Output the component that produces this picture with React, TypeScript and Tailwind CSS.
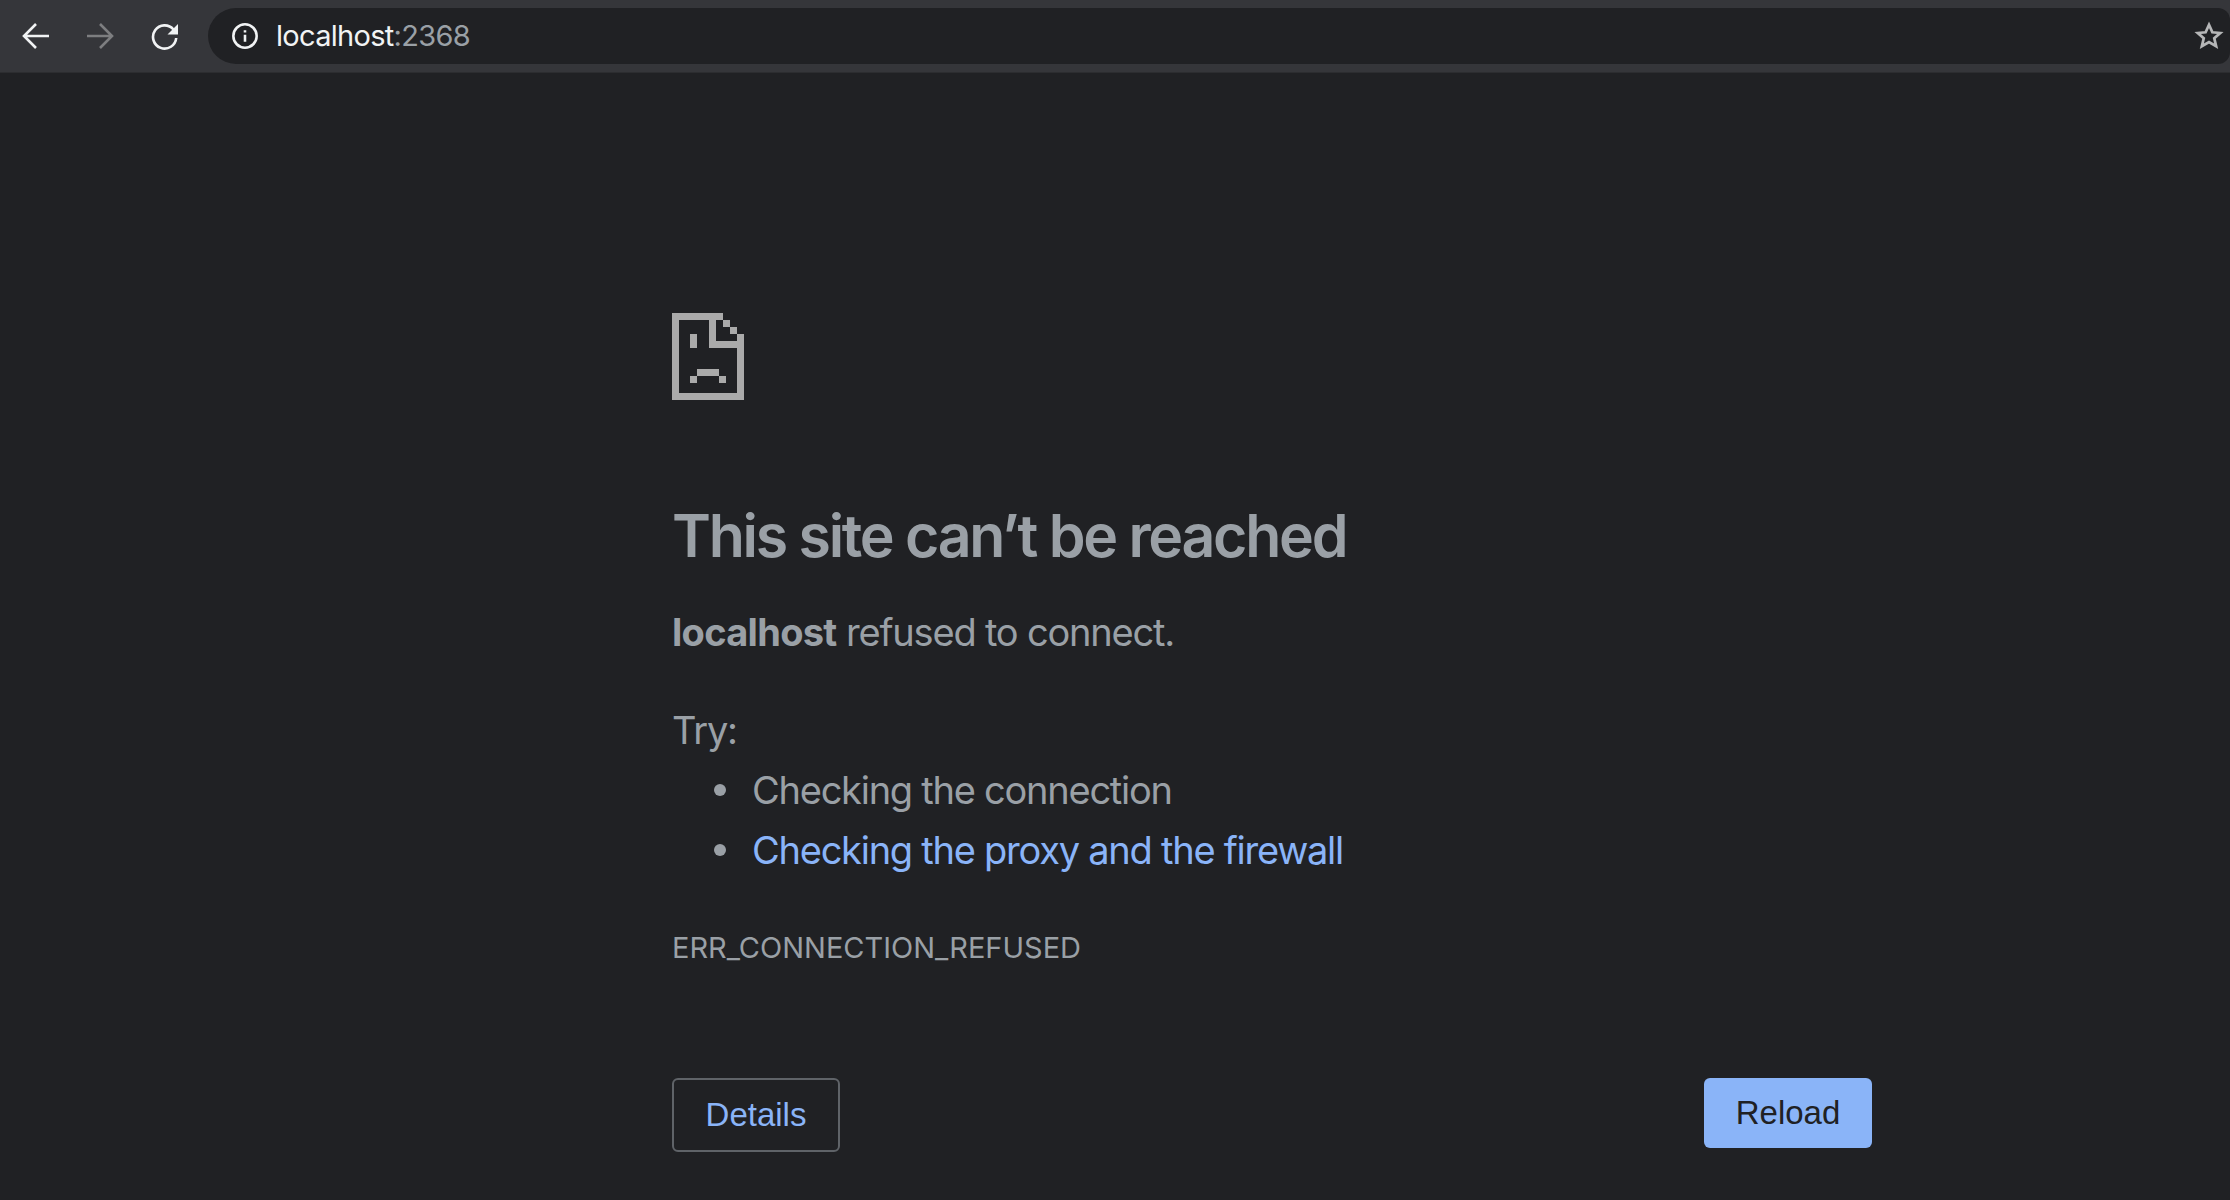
const App = () => {
  return (
    <div className="h-[1200px] overflow-hidden bg-[#202124] font-['Inter',sans-serif] text-[#9aa0a6]">
      {/* Toolbar */}
      <div className="flex h-[73px] items-center bg-[#35363a] border-b-[1px] border-[#2c2d30]">
        <div className="flex w-[208px] shrink-0 items-center pl-[22px]">
          <svg width="28" height="28" viewBox="0 0 28 28" fill="none" stroke="#f1f3f4" strokeWidth="2.6">
            <path d="M27 14H2M14 2L2 14l12 12" />
          </svg>
          <svg className="ml-[36px]" width="28" height="28" viewBox="0 0 28 28" fill="none" stroke="#7d7e80" strokeWidth="2.6">
            <path d="M1 14h25M14 2l12 12-12 12" />
          </svg>
          <svg className="ml-[37px]" width="28" height="28" viewBox="0 0 28 28" fill="none">
            <path d="M22.5 7.5A11.6 11.6 0 1 0 25.2 16" stroke="#f1f3f4" strokeWidth="2.6" />
            <path d="M27 2v10.5H16.5z" fill="#f1f3f4" />
          </svg>
        </div>
        <div className="flex h-[56px] flex-1 items-center rounded-l-[28px] rounded-r-[12px] bg-[#202124] pl-[23px] pr-[6px]">
          <svg width="28" height="28" viewBox="0 0 24 24" fill="none" stroke="#f1f3f4" strokeWidth="2.2">
            <circle cx="12" cy="12" r="10" />
            <path d="M12 11v6M12 7v2" />
          </svg>
          <div className="ml-[17px] flex-1 text-[29px] tracking-[-0.7px] text-[#f1f3f4]">
            localhost<span className="text-[#9aa0a6]">:2368</span>
          </div>
          <svg width="30" height="30" viewBox="0 0 24 24" fill="none" stroke="#b5b6b7" strokeWidth="2.2">
            <path d="M12 3l2.7 6 6.3.6-4.8 4.2 1.5 6.4L12 16.8l-5.7 3.4 1.5-6.4L3 9.6 9.3 9z" />
          </svg>
        </div>
      </div>

      {/* Error page */}
      <main className="ml-[672px] w-[1200px] pt-[240px]">
        <svg width="72" height="87" viewBox="66 39 216 261" fill="#aaaaaa">
          <path d="M66 39h153v21H87v219h174V144h-84V60h21v63h63v-21h21v198H66z" />
          <path d="M219 60h21v21h-21zM240 81h21v21h-21zM120 102h21v42h-21zM141 207h66v21h-66zM120 228h21v21h-21zM207 228h21v21h-21z" />
        </svg>

        <h1 className="mt-[102px] text-[59px] font-semibold leading-[68px] tracking-[-2.26px]">This site can’t be reached</h1>
        <p className="mt-[38px] text-[38px] leading-[48px] tracking-[-1.2px]">
          <strong className="font-bold tracking-[-0.7px]">localhost</strong> refused to connect.
        </p>
        <p className="mt-[50px] text-[38px] leading-[48px] tracking-[-1.2px]">Try:</p>
        <ul className="text-[38px] tracking-[-1.25px]">
          <li className="mt-[12px] flex items-center leading-[48px]">
            <span className="ml-[42px] mr-[26px] h-[12px] w-[12px] rounded-full bg-[#9aa0a6]" />
            Checking the connection
          </li>
          <li className="mt-[12px] flex items-center leading-[48px]">
            <span className="ml-[42px] mr-[26px] h-[12px] w-[12px] rounded-full bg-[#9aa0a6]" />
            <a className="text-[#8ab4f8]">Checking the proxy and the firewall</a>
          </li>
        </ul>
        <p className="mt-[54px] text-[29px] leading-[40px]">ERR_CONNECTION_REFUSED</p>

        <div className="mt-[110px] flex items-start justify-between">
          <button className="h-[74px] w-[168px] rounded-[6px] border-2 border-[#5f6368] font-['Liberation_Sans',sans-serif] text-[33px] text-[#8ab4f8]">
            Details
          </button>
          <button className="h-[70px] w-[168px] rounded-[6px] bg-[#8ab4f8] font-['Liberation_Sans',sans-serif] text-[33px] text-[#202124]">
            Reload
          </button>
        </div>
      </main>
    </div>
  );
};

export default App;
